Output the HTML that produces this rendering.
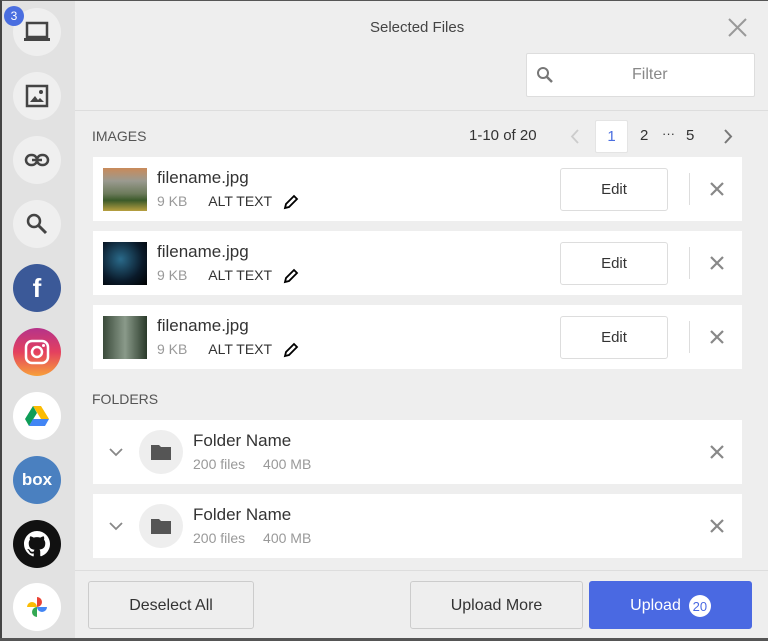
<!DOCTYPE html>
<html><head><style>
*{box-sizing:border-box;margin:0;padding:0}
body{width:768px;height:641px;overflow:hidden;font-family:"Liberation Sans",sans-serif;background:#eee;position:relative;color:#333}
.side{position:absolute;left:0;top:0;width:75px;height:641px;background:#e2e2e2;border-left:2px solid #444;border-top:1px solid #555}
.ic{position:absolute;left:11px;width:48px;height:48px;border-radius:50%;background:#efefef;display:flex;align-items:center;justify-content:center}
.abs{position:absolute}
.row{position:absolute;left:93px;width:649px;height:64px;background:#fff}
.fn{position:absolute;left:64px;top:11px;font-size:17px;color:#333}
.meta{position:absolute;left:64px;top:36px;font-size:14px;color:#999}
.edit{position:absolute;left:467px;top:11px;width:108px;height:43px;border:1px solid #ddd;border-radius:3px;font-size:15px;display:flex;align-items:center;justify-content:center;color:#333}
.sep{position:absolute;left:596px;top:16px;width:1px;height:32px;background:#ddd}
.x{position:absolute;left:617px;top:25px}
.thumb{position:absolute;left:10px;top:11px;width:44px;height:43px}
.pen{position:absolute;left:190px;top:37px}
.btn{position:absolute;top:581px;height:48px;border:1px solid #ccc;border-radius:3px;display:flex;align-items:center;justify-content:center;font-size:16px;color:#333;padding-top:2px}
</style></head><body>
<div class="side">
<div class="ic" style="top:7px"><svg width="26" height="22" viewBox="0 0 26 22"><rect x="3" y="2" width="20" height="14" fill="none" stroke="#444" stroke-width="2.5"/><rect x="0" y="17" width="26" height="3" fill="#444"/></svg></div>
<div class="ic" style="top:71px"><svg width="24" height="24"><rect x="2" y="2" width="20" height="20" fill="none" stroke="#444" stroke-width="2.5"/><path d="M5 18l5-6 3 4 2-2 4 4z" fill="#444"/><circle cx="16" cy="8" r="2" fill="#444"/></svg></div>
<div class="ic" style="top:135px"><svg width="26" height="14"><rect x="2" y="2" width="11" height="10" rx="5" fill="none" stroke="#444" stroke-width="2.5"/><rect x="13" y="2" width="11" height="10" rx="5" fill="none" stroke="#444" stroke-width="2.5"/><line x1="8" y1="7" x2="18" y2="7" stroke="#444" stroke-width="2.5"/></svg></div>
<div class="ic" style="top:199px"><svg width="24" height="24"><circle cx="9" cy="9" r="6" fill="none" stroke="#444" stroke-width="2.5"/><line x1="13" y1="13" x2="21" y2="21" stroke="#444" stroke-width="3"/></svg></div>
<div class="ic" style="top:263px;background:#3b5998;color:#fff;font-weight:bold;font-size:26px">f</div>
<div class="ic" style="top:327px;background:linear-gradient(#b5338a,#e4405f 50%,#f7a03a)"><svg width="26" height="26"><rect x="2" y="2" width="22" height="22" rx="6" fill="none" stroke="#fff" stroke-width="2.5"/><circle cx="13" cy="13" r="5" fill="none" stroke="#fff" stroke-width="2.5"/><circle cx="19.5" cy="6.5" r="1.5" fill="#fff"/></svg></div>
<div class="ic" style="top:391px;background:#fff"><svg width="26" height="22"><path d="M9 1h8l8 13h-8z" fill="#fbbc04"/><path d="M9 1l-8 13 4 7 8-13z" fill="#0f9d58"/><path d="M5 21h16l4-7H9z" fill="#4285f4"/></svg></div>
<div class="ic" style="top:455px;background:#4a80c0;color:#fff;font-weight:bold;font-size:17px">box</div>
<div class="ic" style="top:519px;background:#111"><svg width="26" height="26" viewBox="0 0 16 16"><path fill="#fff" d="M8 0C3.6 0 0 3.6 0 8c0 3.5 2.3 6.5 5.5 7.6.4.1.5-.2.5-.4v-1.4c-2.2.5-2.7-1-2.7-1-.4-.9-.9-1.2-.9-1.200-.7-.5.1-.5.1-.5.8.1 1.2.8 1.2.8.7 1.2 1.9.9 2.3.7.1-.5.3-.9.5-1.1-1.8-.2-3.6-.9-3.6-4 0-.9.3-1.6.8-2.1-.1-.2-.4-1 .1-2.1 0 0 .7-.2 2.2.8.6-.2 1.3-.3 2-.3s1.4.1 2 .3c1.5-1 2.2-.8 2.2-.8.4 1.1.2 1.9.1 2.1.5.6.8 1.3.8 2.1 0 3.1-1.9 3.7-3.6 3.900.3.3.5.8.5 1.5v2.2c0 .2.1.5.6.4C13.7 14.5 16 11.5 16 8c0-4.4-3.6-8-8-8z"/></svg></div>
<div class="ic" style="top:582px;background:#fff"><svg width="26" height="26" viewBox="0 0 26 26"><path d="M13 13V3a5 5 0 0 1 0 10z" fill="#ea4335"/><path d="M13 13h10a5 5 0 0 1-10 0z" fill="#4285f4"/><path d="M13 13v10a5 5 0 0 1 0-10z" fill="#34a853"/><path d="M13 13H3a5 5 0 0 1 10 0z" fill="#fbbc04"/></svg></div>
<div class="abs" style="left:2px;top:5px;width:20px;height:20px;border-radius:50%;background:#4a6ee0;color:#fff;font-size:12px;display:flex;align-items:center;justify-content:center">3</div>
</div>
<div class="abs" style="left:75px;top:0;width:693px;height:1px;background:#555"></div>
<div class="abs" style="left:370px;top:19px;font-size:15px;color:#444">Selected Files</div>
<svg class="abs" style="left:728px;top:18px" width="19" height="19"><path d="M1 1l17 17M18 1L1 18" stroke="#999" stroke-width="2"/></svg>
<div class="abs" style="left:526px;top:53px;width:229px;height:44px;background:#fff;border:1px solid #ddd;border-radius:2px"></div>
<svg class="abs" style="left:536px;top:66px" width="18" height="18"><circle cx="7" cy="7" r="5" fill="none" stroke="#777" stroke-width="2"/><line x1="11" y1="11" x2="16" y2="16" stroke="#777" stroke-width="2.5"/></svg>
<div class="abs" style="left:632px;top:66px;font-size:16px;color:#888">Filter</div>
<div class="abs" style="left:75px;top:110px;width:693px;height:1px;background:#ddd"></div>
<div class="abs" style="left:92px;top:128px;font-size:14px;color:#555">IMAGES</div>
<div class="abs" style="left:469px;top:127px;font-size:15px;color:#333">1-10 of 20</div>
<svg class="abs" style="left:570px;top:129px" width="10" height="15"><path d="M8 1L2 7.5 8 14" fill="none" stroke="#ccc" stroke-width="1.8"/></svg>
<div class="abs" style="left:595px;top:120px;width:33px;height:33px;background:#fff;border:1px solid #e4e4e4;border-radius:2px;color:#4a6ee0;font-size:15px;display:flex;align-items:center;justify-content:center">1</div>
<div class="abs" style="left:640px;top:127px;font-size:15px">2</div>
<div class="abs" style="left:662px;top:126px;font-size:13px">···</div>
<div class="abs" style="left:686px;top:127px;font-size:15px">5</div>
<svg class="abs" style="left:723px;top:129px" width="10" height="15"><path d="M2 1l6 6.5L2 14" fill="none" stroke="#777" stroke-width="2"/></svg>

<div class="row" style="top:157px"><div class="thumb" style="background:linear-gradient(#c98a5a,#9a9a90 30%,#6b7a5a 60%,#3b5a2a 75%,#b8a040)"></div><div class="fn">filename.jpg</div><div class="meta">9 KB <span style="color:#333;margin-left:17px">ALT TEXT</span></div><svg class="pen" width="16" height="16"><path d="M2 14l1-4 8-8 3 3-8 8z" fill="none" stroke="#000" stroke-width="1.8"/></svg><div class="edit">Edit</div><div class="sep"></div><svg class="x" width="14" height="14"><path d="M1 1l12 12M13 1L1 13" stroke="#888" stroke-width="2.2"/></svg></div>
<div class="row" style="top:231px"><div class="thumb" style="background:radial-gradient(circle at 40% 40%,#2a6a8a,#0a1a2a 60%,#000)"></div><div class="fn">filename.jpg</div><div class="meta">9 KB <span style="color:#333;margin-left:17px">ALT TEXT</span></div><svg class="pen" width="16" height="16"><path d="M2 14l1-4 8-8 3 3-8 8z" fill="none" stroke="#000" stroke-width="1.8"/></svg><div class="edit">Edit</div><div class="sep"></div><svg class="x" width="14" height="14"><path d="M1 1l12 12M13 1L1 13" stroke="#888" stroke-width="2.2"/></svg></div>
<div class="row" style="top:305px"><div class="thumb" style="background:linear-gradient(90deg,#3a4a3a,#8a9a8a 50%,#2a3a2a)"></div><div class="fn">filename.jpg</div><div class="meta">9 KB <span style="color:#333;margin-left:17px">ALT TEXT</span></div><svg class="pen" width="16" height="16"><path d="M2 14l1-4 8-8 3 3-8 8z" fill="none" stroke="#000" stroke-width="1.8"/></svg><div class="edit">Edit</div><div class="sep"></div><svg class="x" width="14" height="14"><path d="M1 1l12 12M13 1L1 13" stroke="#888" stroke-width="2.2"/></svg></div>

<div class="abs" style="left:92px;top:391px;font-size:14px;color:#555">FOLDERS</div>
<div class="row" style="top:420px"><svg class="abs" style="left:16px;top:28px" width="14" height="9"><path d="M1 1l6 6 6-6" fill="none" stroke="#888" stroke-width="1.8"/></svg><div class="abs" style="left:46px;top:10px;width:44px;height:44px;border-radius:50%;background:#eee"></div><svg class="abs" style="left:58px;top:24px" width="20" height="16"><path d="M0 1h8l2 2h10v13H0z" fill="#555"/></svg><div class="fn" style="left:100px">Folder Name</div><div class="meta" style="left:100px">200 files <span style="margin-left:14px">400 MB</span></div><svg class="x" width="14" height="14"><path d="M1 1l12 12M13 1L1 13" stroke="#888" stroke-width="2.2"/></svg></div>
<div class="row" style="top:494px"><svg class="abs" style="left:16px;top:28px" width="14" height="9"><path d="M1 1l6 6 6-6" fill="none" stroke="#888" stroke-width="1.8"/></svg><div class="abs" style="left:46px;top:10px;width:44px;height:44px;border-radius:50%;background:#eee"></div><svg class="abs" style="left:58px;top:24px" width="20" height="16"><path d="M0 1h8l2 2h10v13H0z" fill="#555"/></svg><div class="fn" style="left:100px">Folder Name</div><div class="meta" style="left:100px">200 files <span style="margin-left:14px">400 MB</span></div><svg class="x" width="14" height="14"><path d="M1 1l12 12M13 1L1 13" stroke="#888" stroke-width="2.2"/></svg></div>

<div class="abs" style="left:75px;top:570px;width:693px;height:1px;background:#ddd"></div>
<div class="btn" style="left:88px;width:166px">Deselect All</div>
<div class="btn" style="left:410px;width:173px">Upload More</div>
<div class="btn" style="left:589px;width:163px;background:#4a69e2;border-color:#4a69e2;color:#fff">Upload <span style="display:inline-flex;width:22px;height:22px;border-radius:50%;background:#fff;color:#4a69e2;font-size:13px;align-items:center;justify-content:center;margin-left:8px">20</span></div>
<div class="abs" style="left:0;top:638px;width:768px;height:3px;background:#555"></div>
</body></html>
